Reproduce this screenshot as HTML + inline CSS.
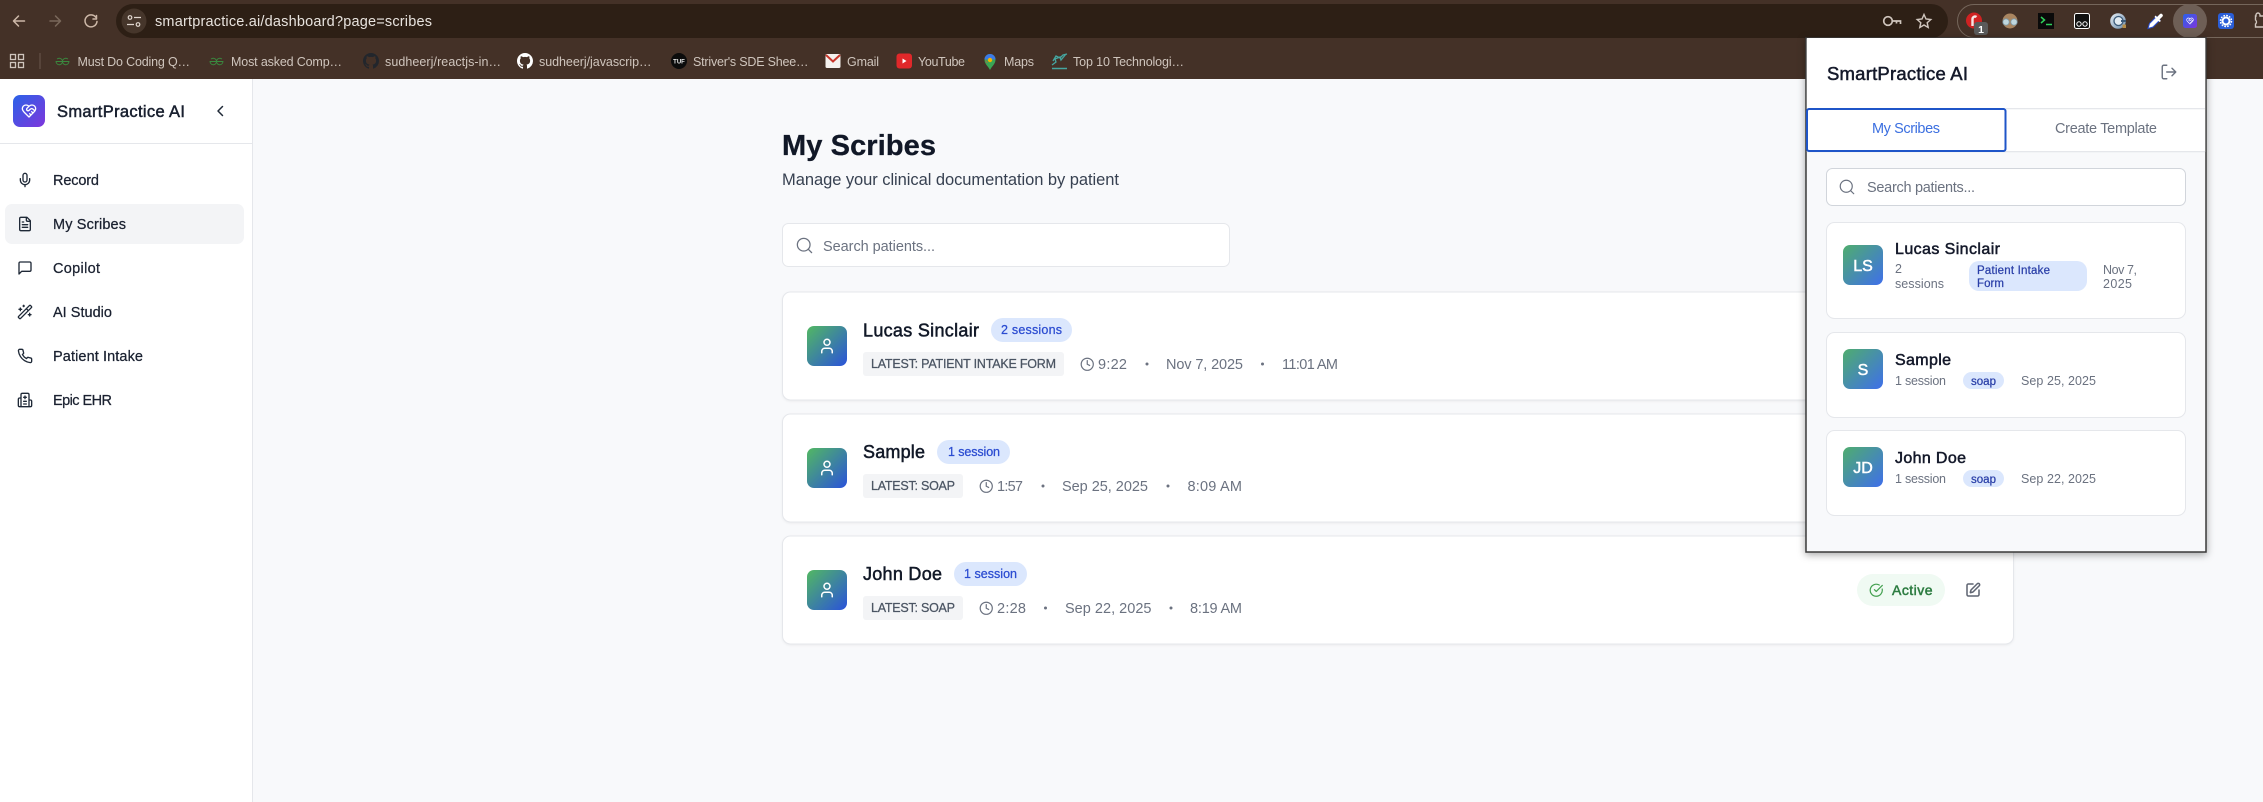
<!DOCTYPE html>
<html lang="en">
<head>
<meta charset="utf-8">
<title>SmartPractice AI - My Scribes</title>
<style>
html,body{margin:0;padding:0;background:#f8f9fb;width:2263px;height:802px;overflow:hidden}
svg{display:block}
text{font-family:"Liberation Sans",Arial,sans-serif;white-space:pre}
.b{font-weight:700}
.m{stroke:currentColor;stroke-width:.25px}
.s{stroke:currentColor;stroke-width:.5px}
.bm{font-size:12.5px;fill:#cfc5bd}
.nav{font-size:14.5px;fill:#1a2130;color:#1a2130}
.meta{font-size:14.5px;fill:#6b7280}
.tag{font-size:12.5px;fill:#4b5563;color:#4b5563}
.chip{font-size:12.5px;fill:#2b4cd1;color:#2b4cd1}
.nm{font-size:18px;fill:#111827;color:#111827}
.pn{font-size:16px;fill:#14192a;color:#14192a}
.pm{font-size:12.500px;fill:#6b7280}
.pc{font-size:11.500px;fill:#2a3fa8;color:#2a3fa8}
.ic{fill:none;stroke-width:2;stroke-linecap:round;stroke-linejoin:round}
</style>
</head>
<body>
<svg width="2263" height="802" viewBox="0 0 2263 802" xmlns="http://www.w3.org/2000/svg">
<defs>
<linearGradient id="gA" x1="0" y1="0" x2="1" y2="1"><stop offset="0" stop-color="#52b862"/><stop offset="1" stop-color="#2a52da"/></linearGradient>
<linearGradient id="gP" x1="0" y1="0" x2="1" y2="1"><stop offset="0" stop-color="#4fad6e"/><stop offset="1" stop-color="#3f6fea"/></linearGradient>
<linearGradient id="gL" x1="0" y1="0" x2="1" y2="1"><stop offset="0" stop-color="#2a62e8"/><stop offset="1" stop-color="#7e36dc"/></linearGradient>
<linearGradient id="gC" x1="0" y1="0" x2="1" y2="1"><stop offset="0" stop-color="#e6edf5"/><stop offset="1" stop-color="#6d8dab"/></linearGradient>
<symbol id="mic" viewBox="0 0 24 24"><path d="M12 2a3 3 0 0 0-3 3v7a3 3 0 0 0 6 0V5a3 3 0 0 0-3-3Z M19 10v2a7 7 0 0 1-14 0v-2 M12 19v3"/></symbol>
<symbol id="file" viewBox="0 0 24 24"><path d="M15 2H6a2 2 0 0 0-2 2v16a2 2 0 0 0 2 2h12a2 2 0 0 0 2-2V7Z M14 2v4a2 2 0 0 0 2 2h4 M10 9H8 M16 13H8 M16 17H8"/></symbol>
<symbol id="msg" viewBox="0 0 24 24"><path d="M21 15a2 2 0 0 1-2 2H7l-4 4V5a2 2 0 0 1 2-2h14a2 2 0 0 1 2 2z"/></symbol>
<symbol id="wand" viewBox="0 0 24 24"><path d="m21.64 3.64-1.28-1.28a1.21 1.21 0 0 0-1.72 0L2.36 18.64a1.21 1.21 0 0 0 0 1.72l1.28 1.28a1.2 1.2 0 0 0 1.72 0L21.64 5.36a1.2 1.2 0 0 0 0-1.72 M14 7l3 3 M5 6v4 M19 14v4 M10 2v2 M7 8H3 M21 16h-4 M11 3H9"/></symbol>
<symbol id="phone" viewBox="0 0 24 24"><path d="M22 16.92v3a2 2 0 0 1-2.18 2 19.79 19.79 0 0 1-8.63-3.07 19.5 19.5 0 0 1-6-6 19.79 19.79 0 0 1-3.07-8.67A2 2 0 0 1 4.11 2h3a2 2 0 0 1 2 1.72 12.84 12.84 0 0 0 .7 2.81 2 2 0 0 1-.45 2.11L8.09 9.91a16 16 0 0 0 6 6l1.27-1.27a2 2 0 0 1 2.11-.45 12.84 12.84 0 0 0 2.81.7A2 2 0 0 1 22 16.92z"/></symbol>
<symbol id="hosp" viewBox="0 0 24 24"><path d="M12 6v4 M14 14h-4 M14 18h-4 M14 8h-4 M18 12h2a2 2 0 0 1 2 2v6a2 2 0 0 1-2 2H4a2 2 0 0 1-2-2v-9a2 2 0 0 1 2-2h2 M18 22V4a2 2 0 0 0-2-2H8a2 2 0 0 0-2 2v18"/></symbol>
<symbol id="search" viewBox="0 0 24 24"><circle cx="11" cy="11" r="8"/><path d="m21 21-4.3-4.3"/></symbol>
<symbol id="user" viewBox="0 0 24 24"><path d="M19 21v-2a4 4 0 0 0-4-4H9a4 4 0 0 0-4 4v2"/><circle cx="12" cy="7" r="4"/></symbol>
<symbol id="clock" viewBox="0 0 24 24"><circle cx="12" cy="12" r="10"/><path d="M12 6v6l4 2"/></symbol>
<symbol id="check" viewBox="0 0 24 24"><path d="M21.801 10A10 10 0 1 1 17 3.335 M9 11l3 3L22 4"/></symbol>
<symbol id="pen" viewBox="0 0 24 24"><path d="M12 3H5a2 2 0 0 0-2 2v14a2 2 0 0 0 2 2h14a2 2 0 0 0 2-2v-7 M18.375 2.625a1 1 0 0 1 3 3l-9.013 9.014a2 2 0 0 1-.853.505l-2.873.84a.5.5 0 0 1-.62-.62l.84-2.873a2 2 0 0 1 .506-.852z"/></symbol>
<symbol id="logout" viewBox="0 0 24 24"><path d="M9 21H5a2 2 0 0 1-2-2V5a2 2 0 0 1 2-2h4 M16 17l5-5-5-5 M21 12H9"/></symbol>
<symbol id="heart" viewBox="0 0 24 24"><path d="M19 14c1.49-1.46 3-3.21 3-5.5A5.5 5.5 0 0 0 16.5 3c-1.76 0-3 .5-4.5 2-1.5-1.5-2.74-2-4.5-2A5.5 5.5 0 0 0 2 8.5c0 2.3 1.5 4.05 3 5.5l7 7Z M12 5 9.04 7.96a2.17 2.17 0 0 0 0 3.08c.82.82 2.13.85 3 .07l2.07-1.9a2.82 2.82 0 0 1 3.79 0l2.96 2.66 M18 15l-2-2 M15 18l-2-2"/></symbol>
<symbol id="gh" viewBox="0 0 16 16"><path d="M8 0C3.58 0 0 3.58 0 8c0 3.54 2.29 6.53 5.47 7.59.4.07.55-.17.55-.38 0-.19-.01-.82-.01-1.49-2.01.37-2.53-.49-2.69-.94-.09-.23-.48-.94-.82-1.13-.28-.15-.68-.52-.01-.53.63-.01 1.08.58 1.23.82.72 1.21 1.87.87 2.33.66.07-.52.28-.87.51-1.07-1.78-.2-3.64-.89-3.64-3.95 0-.87.31-1.59.82-2.15-.08-.2-.36-1.02.08-2.12 0 0 .67-.21 2.2.82.64-.18 1.32-.27 2-.27s1.36.09 2 .27c1.53-1.04 2.2-.82 2.2-.82.44 1.1.16 1.92.08 2.12.51.56.82 1.27.82 2.15 0 3.07-1.87 3.75-3.65 3.95.29.25.54.73.54 1.48 0 1.07-.01 1.93-.01 2.2 0 .21.15.46.55.38A8.01 8.01 0 0 0 16 8c0-4.42-3.58-8-8-8z"/></symbol>
<symbol id="gfg" viewBox="0 0 16 10"><path d="M8 5h7.200a3.600 3.600 0 1 1-1.200-2.700 M8 5H.8A3.600 3.600 0 1 0 2 2.300" fill="none" stroke="#3a8a3f" stroke-width="1"/></symbol>
</defs>

<!-- Page background -->
<rect width="2263" height="802" fill="#f8f9fb"/>

<!-- Browser chrome -->
<rect width="2263" height="79" fill="#443127"/>
<g class="ic" style="stroke:#cdb8a8;stroke-width:1.500" fill="none">
  <path d="M24.500 21H14M18.500 16 13.500 21l5 5"/>
  <path d="M50 21h10.500M55.500 16l5 5-5 5" style="stroke:#7a685b"/>
  <path d="M96 17.500a6 6 0 1 0 1 4M96.500 15.500v3.500h-3.500"/>
</g>
<rect x="116" y="4" width="1832" height="34" rx="17" fill="#2d1f15"/>
<circle cx="134" cy="21" r="12.500" fill="#46362b"/>
<g fill="none" stroke="#e0d6ce" stroke-width="1.200">
  <circle cx="130" cy="17.500" r="1.800"/><path d="M134 17.500h7M127 24.500h7"/><circle cx="138" cy="24.500" r="1.800"/>
</g>
<text x="155" y="26" font-size="14.500" fill="#e8e3de" textLength="277">smartpractice.ai/dashboard?page=scribes</text>
<!-- key + star -->
<g fill="none" stroke="#d0c6be" stroke-width="1.700">
  <circle cx="1888" cy="21" r="4.300"/><path d="M1892.500 21h8v3M1896.500 21v2.500"/>
  <path d="M1924 14.500l2 4.500 4.800.5-3.600 3.200 1 4.800-4.200-2.500-4.200 2.500 1-4.800-3.600-3.200 4.800-.5z" stroke-width="1.400"/>
</g>
<!-- Extensions -->
<rect x="1957.500" y="4.500" width="340" height="33" rx="16.500" fill="none" stroke="#75665b" stroke-width="1"/>
<circle cx="1974" cy="20.500" r="8" fill="#cf2222"/><path d="M1972.500 26v-7a2.500 2.500 0 0 1 4-2" fill="none" stroke="#f4e6e4" stroke-width="2.400"/>
<rect x="1974" y="22" width="14" height="13" rx="3" fill="#5a5a5a"/><text x="1981" y="33" font-size="10.500" class="b" fill="#fff" text-anchor="middle">1</text>
<circle cx="2010" cy="21" r="7.500" fill="#a98560"/><circle cx="2006" cy="22" r="3.200" fill="#bfd6dd" stroke="#7a98a8" stroke-width=".8"/><circle cx="2014" cy="22" r="3.200" fill="#bfd6dd" stroke="#7a98a8" stroke-width=".8"/>
<rect x="2038" y="13" width="16" height="16" fill="#0a0a0a"/><path d="M2041 17l3.500 3-3.500 3M2046 24.500h6" fill="none" stroke="#2fd15a" stroke-width="1.500"/>
<rect x="2074.500" y="13.500" width="15" height="15" rx="2" fill="#111" stroke="#fff" stroke-width="1"/><circle cx="2079" cy="24" r="2.200" fill="none" stroke="#fff"/><circle cx="2085" cy="24" r="2.200" fill="none" stroke="#fff"/>
<circle cx="2118" cy="21" r="7.800" fill="url(#gC)"/><circle cx="2118.500" cy="21" r="4.500" fill="#e3ebf2" stroke="#3b5a78" stroke-width="1.300"/><rect x="2121" y="20" width="5" height="2" fill="#3b5a78"/><rect x="2122.500" y="24.500" width="3.500" height="3.500" fill="#b68d46"/>
<path d="M2148 28.500l1.500-5 7-7 3.500 3.500-7 7z" fill="#fff" stroke="#2a4ed0" stroke-width="1"/><path d="M2155.500 15.500l1.500 1.500 3-3a1.800 1.800 0 0 1 2.500 2.500l-3 3 1.500 1.500-1.500 1-5-5z" fill="#fff"/>
<circle cx="2190" cy="21" r="17" fill="#6e5f56"/>
<rect x="2183" y="14" width="14" height="14" rx="2.500" fill="url(#gL)"/>
<use href="#heart" x="2186" y="17" width="8" height="8" class="ic" style="stroke:#fff"/>
<rect x="2218" y="13" width="16" height="16" rx="3" fill="#2a5ed8"/>
<circle cx="2226" cy="21" r="3.500" fill="none" stroke="#fff" stroke-width="2"/><circle cx="2226" cy="21" r="5.500" fill="none" stroke="#fff" stroke-width="1.500" stroke-dasharray="1.700 1.180"/>
<path d="M2263 16h-3v-1a2 2 0 0 0-4 0v1h-.5v4a2.500 2.500 0 0 1 0 4v3h7.500" fill="none" stroke="#d0c6be" stroke-width="1.400"/>

<!-- Bookmarks bar -->
<g fill="none" stroke="#cfc5bd" stroke-width="1.300">
  <rect x="10.500" y="54.500" width="5" height="5"/><rect x="18.500" y="54.500" width="5" height="5"/><rect x="10.500" y="62.500" width="5" height="5"/><rect x="18.500" y="62.500" width="5" height="5"/>
</g>
<rect x="39.500" y="53" width="1" height="16" fill="#6a584c"/>
<use href="#gfg" x="55" y="57" width="15" height="9"/>
<text x="77.500" y="66" class="bm" textLength="112.500">Must Do Coding Q…</text>
<use href="#gfg" x="209" y="57" width="15" height="9"/>
<text x="231" y="66" class="bm" textLength="111">Most asked Comp…</text>
<use href="#gh" x="363" y="53" width="16" height="16" fill="#22262c"/>
<text x="385" y="66" class="bm" textLength="116">sudheerj/reactjs-in…</text>
<use href="#gh" x="517" y="53" width="16" height="16" fill="#fff"/>
<text x="539" y="66" class="bm" textLength="112.500">sudheerj/javascrip…</text>
<circle cx="679" cy="61" r="8" fill="#0c0c0c"/><text x="679" y="63.500" font-size="6" class="b" fill="#eee" text-anchor="middle">TUF</text>
<text x="693" y="66" class="bm" textLength="115.500">Striver's SDE Shee…</text>
<rect x="825.500" y="54" width="15" height="14" rx="1.500" fill="#f4f1ee"/><path d="M826 55l7 6.500 7-6.500" fill="none" stroke="#c8362b" stroke-width="2"/>
<text x="847" y="66" class="bm" textLength="32">Gmail</text>
<rect x="896.500" y="53.500" width="15.500" height="15" rx="3" fill="#e0282a"/><path d="M902.500 58.500l4 2.500-4 2.500z" fill="#fff"/>
<text x="918" y="66" class="bm" textLength="47">YouTube</text>
<path d="M990 70c-2-4-5.500-6-5.500-10.500a5.500 5.500 0 0 1 11 0c0 4.500-3.500 6.500-5.500 10.500z" fill="#3aa655"/><path d="M984.500 59.500a5.500 5.500 0 0 1 11 0z" fill="#3b78e7"/><path d="M985 60l3 3-1.500-.5z" fill="#e8453c"/><circle cx="990" cy="60" r="2.200" fill="#f4b400"/>
<text x="1004" y="66" class="bm" textLength="30">Maps</text>
<path d="M1052 65l4-3-1-3 5-2 1 3 5-6M1053 61l3-5 4 2 3-3 4-1" fill="none" stroke="#45a6a0" stroke-width="1.300"/><path d="M1052 68.500h15" stroke="#45a6a0" stroke-width="1.500"/>
<text x="1073" y="66" class="bm" textLength="111">Top 10 Technologi…</text>

<!-- Sidebar -->
<rect x="0" y="79" width="252" height="723" fill="#fff"/>
<rect x="252" y="79" width="1" height="723" fill="#e5e7eb"/>
<rect x="0" y="143" width="252" height="1" fill="#e5e7eb"/>
<rect x="13" y="95" width="32" height="32" rx="7" fill="url(#gL)"/>
<use href="#heart" x="21" y="103" width="16" height="16" class="ic" style="stroke:#fff"/>
<text x="57" y="117" font-size="16.500" class="s" fill="#1a2130" color="#1a2130" textLength="128">SmartPractice AI</text>
<path d="M222.500 106.500l-4.500 4.500 4.500 4.500" fill="none" stroke="#1f2937" stroke-width="1.500" stroke-linecap="round" stroke-linejoin="round"/>
<rect x="5" y="204" width="239" height="40" rx="7" fill="#f3f4f6"/>
<g class="ic" style="stroke:#1f2937;stroke-width:2">
  <use href="#mic" x="17" y="172" width="16" height="16"/>
  <use href="#file" x="17" y="216" width="16" height="16"/>
  <use href="#msg" x="17" y="260" width="16" height="16"/>
  <use href="#wand" x="17" y="304" width="16" height="16"/>
  <use href="#phone" x="17" y="348" width="16" height="16"/>
  <use href="#hosp" x="17" y="392" width="16" height="16"/>
</g>
<text x="53" y="185" class="nav m" textLength="46">Record</text>
<text x="53" y="229" class="nav m" textLength="73">My Scribes</text>
<text x="53" y="273" class="nav m" textLength="47">Copilot</text>
<text x="53" y="317" class="nav m" textLength="59">AI Studio</text>
<text x="53" y="361" class="nav m" textLength="90">Patient Intake</text>
<text x="53" y="405" class="nav m" textLength="59">Epic EHR</text>

<!-- Main header -->
<text x="782" y="155" font-size="29" class="b" fill="#111827" stroke="#111827" stroke-width=".3" textLength="154">My Scribes</text>
<text x="782" y="185" font-size="16.500" fill="#374151" textLength="337">Manage your clinical documentation by patient</text>
<rect x="782.500" y="223.500" width="447" height="43" rx="6" fill="#fff" stroke="#e5e7eb"/>
<use href="#search" x="795" y="236" width="19" height="19" class="ic" style="stroke:#6b7280;stroke-width:1.600"/>
<text x="823" y="251" font-size="14.500" fill="#6b7280" textLength="112">Search patients...</text>

<!-- Card 1 -->
<rect x="782.500" y="292" width="1231" height="108" rx="8" fill="#fff" stroke="#e5e7eb" style="filter:drop-shadow(0 1px 1px rgba(0,0,0,.05))"/>
<rect x="807" y="326" width="40" height="40" rx="7" fill="url(#gA)"/>
<use href="#user" x="818" y="337" width="18" height="18" class="ic" style="stroke:#fff"/>
<text x="863" y="336.500" class="nm s" textLength="116">Lucas Sinclair</text>
<rect x="991" y="318" width="81" height="24" rx="12" fill="#dbe7fd"/>
<text x="1001" y="334" class="chip m" textLength="61">2 sessions</text>
<rect x="863" y="352" width="201" height="24" rx="3" fill="#f3f4f6"/>
<text x="871" y="368" class="tag m" textLength="185">LATEST: PATIENT INTAKE FORM</text>
<use href="#clock" x="1080" y="357" width="14.500" height="14.500" class="ic" style="stroke:#6b7280"/>
<text x="1098" y="369" class="meta" textLength="29">9:22</text>
<circle cx="1147" cy="364" r="1.500" fill="#6b7280"/>
<text x="1166" y="369" class="meta" textLength="77">Nov 7, 2025</text>
<circle cx="1262.500" cy="364" r="1.500" fill="#6b7280"/>
<text x="1282" y="369" class="meta" textLength="56">11:01 AM</text>

<!-- Card 2 -->
<rect x="782.500" y="414" width="1231" height="108" rx="8" fill="#fff" stroke="#e5e7eb" style="filter:drop-shadow(0 1px 1px rgba(0,0,0,.05))"/>
<rect x="807" y="448" width="40" height="40" rx="7" fill="url(#gA)"/>
<use href="#user" x="818" y="459" width="18" height="18" class="ic" style="stroke:#fff"/>
<text x="863" y="458" class="nm s" textLength="62">Sample</text>
<rect x="937" y="440" width="73" height="24" rx="12" fill="#dbe7fd"/>
<text x="948" y="456" class="chip m" textLength="52">1 session</text>
<rect x="863" y="474" width="100" height="24" rx="3" fill="#f3f4f6"/>
<text x="871" y="490" class="tag m" textLength="84">LATEST: SOAP</text>
<use href="#clock" x="979" y="479" width="14.500" height="14.500" class="ic" style="stroke:#6b7280"/>
<text x="997" y="491" class="meta" textLength="26">1:57</text>
<circle cx="1043" cy="486" r="1.500" fill="#6b7280"/>
<text x="1062" y="491" class="meta" textLength="86">Sep 25, 2025</text>
<circle cx="1168" cy="486" r="1.500" fill="#6b7280"/>
<text x="1187.500" y="491" class="meta" textLength="54.500">8:09 AM</text>

<!-- Card 3 -->
<rect x="782.500" y="536" width="1231" height="108" rx="8" fill="#fff" stroke="#e5e7eb" style="filter:drop-shadow(0 1px 1px rgba(0,0,0,.05))"/>
<rect x="807" y="570" width="40" height="40" rx="7" fill="url(#gA)"/>
<use href="#user" x="818" y="581" width="18" height="18" class="ic" style="stroke:#fff"/>
<text x="863" y="580" class="nm s" textLength="79">John Doe</text>
<rect x="954" y="562" width="73" height="24" rx="12" fill="#dbe7fd"/>
<text x="964" y="578" class="chip m" textLength="53">1 session</text>
<rect x="863" y="596" width="100" height="24" rx="3" fill="#f3f4f6"/>
<text x="871" y="612" class="tag m" textLength="84">LATEST: SOAP</text>
<use href="#clock" x="979" y="601" width="14.500" height="14.500" class="ic" style="stroke:#6b7280"/>
<text x="997" y="613" class="meta" textLength="29">2:28</text>
<circle cx="1045.500" cy="608" r="1.500" fill="#6b7280"/>
<text x="1065" y="613" class="meta" textLength="86.500">Sep 22, 2025</text>
<circle cx="1171" cy="608" r="1.500" fill="#6b7280"/>
<text x="1190" y="613" class="meta" textLength="52">8:19 AM</text>
<rect x="1857" y="574" width="88" height="32" rx="16" fill="#f0faf3"/>
<use href="#check" x="1869" y="583" width="14.500" height="14.500" class="ic" style="stroke:#43a04f"/>
<text x="1892" y="595" font-size="14" class="s" fill="#2e7d42" color="#2e7d42" textLength="40.500">Active</text>
<use href="#pen" x="1965" y="582" width="16" height="16" class="ic" style="stroke:#5f6572;stroke-width:2.300"/>

<!-- Extension popup -->
<rect x="1806" y="38" width="400" height="514" fill="#f8f9fb" stroke="#3a3a3a" stroke-width="1.500" style="filter:drop-shadow(0 2px 4px rgba(0,0,0,.35))"/>
<rect x="1806.800" y="38" width="398.400" height="114" fill="#fff"/>
<rect x="1807" y="151" width="398" height="1.300" fill="#e5e7eb"/>
<rect x="2006" y="108" width="199" height="1.300" fill="#e5e7eb"/>
<text x="1827" y="80" font-size="18.500" class="s" fill="#14192a" color="#14192a" textLength="141">SmartPractice AI</text>
<use href="#logout" x="2160" y="63" width="18" height="18" class="ic" style="stroke:#6b7280;stroke-width:1.900"/>
<rect x="1807" y="109" width="198.500" height="42" rx="2" fill="#fff" stroke="#1f55c8" stroke-width="2"/>
<text x="1872" y="133" font-size="14.500" fill="#3b6fe0" textLength="68">My Scribes</text>
<text x="2055" y="133" font-size="14.500" fill="#6b7280" textLength="102">Create Template</text>

<rect x="1826.500" y="168.500" width="359" height="37" rx="6" fill="#fff" stroke="#d1d5db"/>
<use href="#search" x="1838" y="178" width="18" height="18" class="ic" style="stroke:#6b7280;stroke-width:1.600"/>
<text x="1867" y="192" font-size="14.500" fill="#6b7280" textLength="108">Search patients...</text>

<!-- Popup card 1 -->
<rect x="1826.500" y="222.500" width="359" height="96" rx="8" fill="#fff" stroke="#e5e7eb"/>
<rect x="1843" y="245" width="40" height="40" rx="7" fill="url(#gP)"/>
<text x="1863" y="271" font-size="16" class="s" fill="#fff" color="#fff" text-anchor="middle">LS</text>
<text x="1895" y="254" class="pn s" textLength="105">Lucas Sinclair</text>
<text x="1895" y="273" class="pm">2</text>
<text x="1895" y="288" class="pm" textLength="49">sessions</text>
<rect x="1969" y="261" width="118" height="30" rx="10" fill="#dbe7fd"/>
<text x="1977" y="274" class="pc m" textLength="73">Patient Intake</text>
<text x="1977" y="287" class="pc m" textLength="27">Form</text>
<text x="2103" y="274" class="pm" textLength="34">Nov 7,</text>
<text x="2103" y="288" class="pm" textLength="29">2025</text>

<!-- Popup card 2 -->
<rect x="1826.500" y="332.500" width="359" height="85" rx="8" fill="#fff" stroke="#e5e7eb"/>
<rect x="1843" y="349" width="40" height="40" rx="7" fill="url(#gP)"/>
<text x="1863" y="375" font-size="16" class="s" fill="#fff" color="#fff" text-anchor="middle">S</text>
<text x="1895" y="365" class="pn s" textLength="56">Sample</text>
<text x="1895" y="385" class="pm" textLength="51">1 session</text>
<rect x="1963" y="372" width="41" height="17" rx="8.500" fill="#dbe7fd"/>
<text x="1971" y="385" class="pc m" textLength="25">soap</text>
<text x="2021" y="385" class="pm" textLength="75">Sep 25, 2025</text>

<!-- Popup card 3 -->
<rect x="1826.500" y="430.500" width="359" height="85" rx="8" fill="#fff" stroke="#e5e7eb"/>
<rect x="1843" y="447" width="40" height="40" rx="7" fill="url(#gP)"/>
<text x="1863" y="473" font-size="16" class="s" fill="#fff" color="#fff" text-anchor="middle">JD</text>
<text x="1895" y="463" class="pn s" textLength="71">John Doe</text>
<text x="1895" y="483" class="pm" textLength="51">1 session</text>
<rect x="1963" y="470" width="41" height="17" rx="8.500" fill="#dbe7fd"/>
<text x="1971" y="483" class="pc m" textLength="25">soap</text>
<text x="2021" y="483" class="pm" textLength="75">Sep 22, 2025</text>
</svg>
</body>
</html>
